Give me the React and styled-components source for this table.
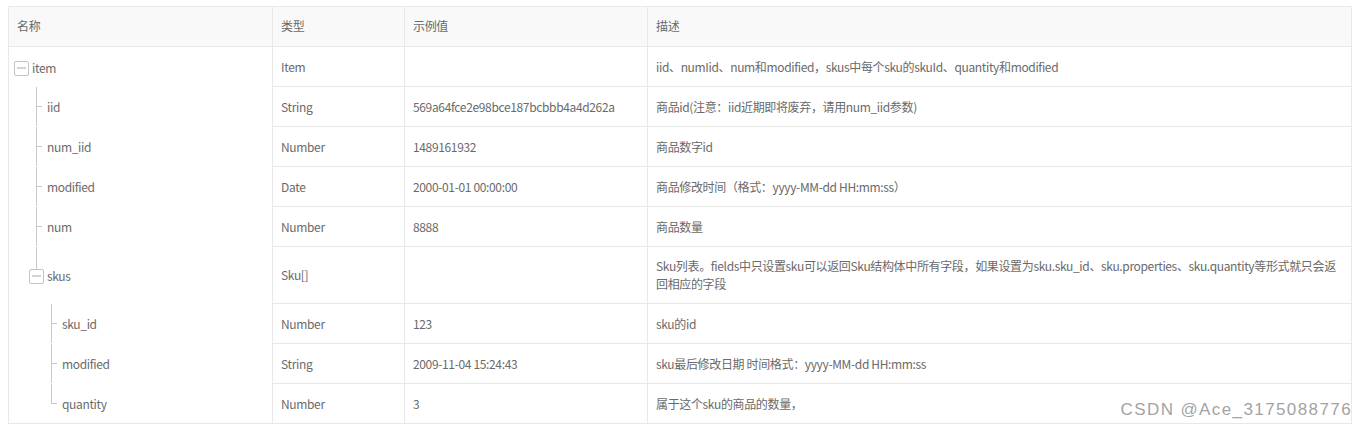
import styled, { createGlobalStyle } from "styled-components";

const GlobalStyle = createGlobalStyle`
    html, body {
        margin: 0;
        padding: 0;
        background: #fff;
    }
    body {
        font-family: "Noto Sans CJK SC", "Noto Sans", sans-serif;
        font-size: 12px;
        letter-spacing: -0.35px;
        color: #6a6a6a;
    }
`;

const rows = [
    {
        name: "item",
        depth: 0,
        box: true,
        type: "Item",
        example: "",
        desc: "iid、numIid、num和modified，skus中每个sku的skuId、quantity和modified",
    },
    {
        name: "iid",
        depth: 1,
        type: "String",
        example: "569a64fce2e98bce187bcbbb4a4d262a",
        desc: "商品id(注意：iid近期即将废弃，请用num_iid参数)",
    },
    { name: "num_iid", depth: 1, type: "Number", example: "1489161932", desc: "商品数字id" },
    {
        name: "modified",
        depth: 1,
        type: "Date",
        example: "2000-01-01 00:00:00",
        desc: "商品修改时间（格式：yyyy-MM-dd HH:mm:ss）",
    },
    { name: "num", depth: 1, type: "Number", example: "8888", desc: "商品数量" },
    {
        name: "skus",
        depth: 1,
        box: true,
        lineAbove: true,
        type: "Sku[]",
        example: "",
        desc: "Sku列表。fields中只设置sku可以返回Sku结构体中所有字段，如果设置为sku.sku_id、sku.properties、sku.quantity等形式就只会返回相应的字段",
    },
    { name: "sku_id", depth: 2, type: "Number", example: "123", desc: "sku的id" },
    {
        name: "modified",
        depth: 2,
        type: "String",
        example: "2009-11-04 15:24:43",
        desc: "sku最后修改日期 时间格式：yyyy-MM-dd HH:mm:ss",
    },
    {
        name: "quantity",
        depth: 2,
        last: true,
        type: "Number",
        example: "3",
        desc: "属于这个sku的商品的数量，",
    },
];

export default function App() {
    return (
        <Page>
            <GlobalStyle />
            <Table>
                <HeadRow>
                    <HeadCell>名称</HeadCell>
                    <HeadCell $divider>类型</HeadCell>
                    <HeadCell $divider>示例值</HeadCell>
                    <HeadCell $divider>描述</HeadCell>
                </HeadRow>
                {rows.map((row, i) => (
                    <Row key={i}>
                        <NameCell>
                            {row.box ? (
                                <>
                                    <Spacer style={{ width: 5 + row.depth * 15 }} />
                                    <BoxSlot $lineAbove={row.lineAbove}>
                                        <Toggle>
                                            <span />
                                        </Toggle>
                                    </BoxSlot>
                                </>
                            ) : (
                                <>
                                    <Spacer style={{ width: 12 + row.depth * 15 }} />
                                    <Guide $last={row.last} />
                                </>
                            )}
                            <Label>{row.name}</Label>
                        </NameCell>
                        <Cell $top={i > 0}>{row.type}</Cell>
                        <Cell $top={i > 0}>{row.example}</Cell>
                        <Cell $top={i > 0}>{row.desc}</Cell>
                    </Row>
                ))}
            </Table>
            <Watermark>CSDN @Ace_3175088776</Watermark>
        </Page>
    );
}

const Page = styled.div`
    position: relative;
    width: 1368px;
    height: 431px;
    padding: 6px 0 0 8px;
    box-sizing: border-box;
`;

const Table = styled.div`
    width: 1344px;
    box-sizing: border-box;
    border: 1px solid #e8e8e8;
`;

const columns = `
    display: grid;
    grid-template-columns: 263px 132px 243px 1fr;
`;

const HeadRow = styled.div`
    ${columns}
    background: #f9f9f9;
    border-bottom: 1px solid #e8e8e8;
`;

const HeadCell = styled.div`
    padding: 10px 8px 11px;
    line-height: 18px;
    border-left: ${(p) => (p.$divider ? "1px solid #e8e8e8" : "none")};
`;

const Row = styled.div`
    ${columns}
`;

const Cell = styled.div`
    display: flex;
    align-items: center;
    padding: 10px 8px;
    min-height: 19px;
    line-height: 18px;
    border-left: 1px solid #e8e8e8;
    border-top: ${(p) => (p.$top ? "1px solid #e8e8e8" : "none")};
    word-break: break-all;
`;

const NameCell = styled.div`
    display: flex;
    align-items: stretch;
    border-top: 1px solid transparent;
    line-height: 18px;
`;

const Spacer = styled.span`
    flex: none;
`;

const Guide = styled.span`
    flex: none;
    width: 6px;
    margin-right: 5px;
    background:
        linear-gradient(#c8c8c8, #c8c8c8) left top / 1px ${(p) => (p.$last ? "50%" : "100%")} no-repeat,
        linear-gradient(#c8c8c8, #c8c8c8) left center / 6px 1px no-repeat;
`;

const BoxSlot = styled.span`
    flex: none;
    width: 15px;
    margin-right: 3px;
    display: flex;
    align-items: center;
    padding-top: 2px;
    background: ${(p) =>
        p.$lineAbove ? "linear-gradient(#c8c8c8, #c8c8c8) 7px 0 / 1px 50% no-repeat" : "none"};
`;

const Toggle = styled.span`
    width: 15px;
    height: 15px;
    box-sizing: border-box;
    border: 1px solid #c4c4c4;
    border-radius: 2px;
    background: #fff;
    display: flex;
    align-items: center;
    justify-content: center;

    span {
        width: 9px;
        height: 2px;
        background: #d4d4d4;
    }
`;

const Label = styled.span`
    align-self: center;
    padding-top: 1px;
    white-space: nowrap;
`;

const Watermark = styled.div`
    position: absolute;
    right: 16px;
    top: 400px;
    font-family: "Liberation Sans", Arial, sans-serif;
    font-size: 17px;
    letter-spacing: 1.4px;
    line-height: 20px;
    color: #a3a3a3;
`;
